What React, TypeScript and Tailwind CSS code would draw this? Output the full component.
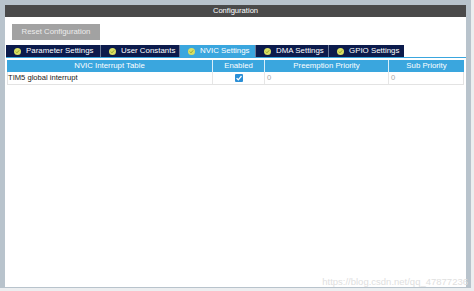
import React from 'react';

const tabs = [
  { label: 'Parameter Settings', width: 'w-[94px]', active: false },
  { label: 'User Constants', width: 'w-[79px]', active: false },
  { label: 'NVIC Settings', width: 'w-[76px]', active: true },
  { label: 'DMA Settings', width: 'w-[73px]', active: false },
  { label: 'GPIO Settings', width: 'w-[76px]', active: false },
];

const StatusDot: React.FC = () => (
  <svg width="7" height="7" viewBox="0 0 7 7" className="shrink-0">
    <circle cx="3.5" cy="3.5" r="3.5" fill="#d9df62" />
    <path d="M1.8 3.6 L3 4.8 L5.2 2.3" stroke="#8a9a2a" strokeWidth="0.9" fill="none" />
  </svg>
);

const CheckBox: React.FC = () => (
  <svg width="8" height="8" viewBox="0 0 8 8">
    <rect x="0" y="0" width="8" height="8" rx="1" fill="#2b8fd6" />
    <path d="M1.6 4.1 L3.3 5.8 L6.5 2" stroke="#ffffff" strokeWidth="1.3" fill="none" />
  </svg>
);

const App: React.FC = () => {
  return (
    <div
      className="w-[474px] h-[291px] bg-[#eceef0] overflow-hidden"
      style={{ fontFamily: '"Liberation Sans", Arial, sans-serif' }}
    >
      <div className="w-[471px] h-[288px] bg-[#b8c3cc] pl-[5px] pt-[5px] pr-[5px] pb-[1px]">
        <div className="relative w-full h-full bg-white flex flex-col">
          <div className="h-[12px] bg-[#4a4a4a] flex items-center justify-center text-[7.6px] text-white leading-none">
            Configuration
          </div>

          <div className="pl-[7px] pt-[7px]">
            <div className="w-[88px] h-[16px] bg-[#a2a2a2] flex items-center justify-center text-[7.8px] text-[#ececec] leading-none">
              Reset Configuration
            </div>
          </div>

          <div className="mt-[5px] pl-[1px] flex">
            {tabs.map((t, i) => (
              <div
                key={t.label}
                className={`${t.width} h-[12px] flex items-center gap-[5px] pl-[8px] text-[7.9px] leading-none text-white ${
                  t.active ? 'bg-[#3aa6de]' : 'bg-[#0c1b4c]'
                } ${i > 0 ? 'border-l border-[#6a7896]' : ''}`}
              >
                <StatusDot />
                <span>{t.label}</span>
              </div>
            ))}
          </div>
          <div className="h-[1px] bg-[#3aa6de] ml-[1px]" />

          <div className="mt-[2px] ml-[2px] w-[457px]">
            <div className="flex h-[12px] bg-[#3aa6de] text-white text-[7.8px] leading-none">
              <div className="w-[205px] flex items-center justify-center">NVIC Interrupt Table</div>
              <div className="w-[52px] border-l border-[#d9eef9] flex items-center justify-center">Enabled</div>
              <div className="w-[124px] border-l border-[#d9eef9] flex items-center justify-center">Preemption Priority</div>
              <div className="flex-1 border-l border-[#d9eef9] flex items-center justify-center">Sub Priority</div>
            </div>
            <div className="flex h-[13px] border-b border-l border-r border-[#e3e3e3] text-[7.6px] leading-none">
              <div className="w-[204px] flex items-center text-[#1a1a1a]">TIM5 global interrupt</div>
              <div className="w-[52px] border-l border-[#e6e6e6] flex items-center justify-center">
                <CheckBox />
              </div>
              <div className="w-[124px] border-l border-[#e6e6e6] flex items-center pl-[2px] text-[#a8a8a8]">0</div>
              <div className="flex-1 border-l border-[#e6e6e6] flex items-center pl-[2px] text-[#a8a8a8]">0</div>
            </div>
          </div>

          <div className="absolute right-[-2px] bottom-[1px] text-[9.5px] text-[#e0e0e0] leading-none">
            https://blog.csdn.net/qq_47877236
          </div>
        </div>
      </div>
    </div>
  );
};

export default App;
